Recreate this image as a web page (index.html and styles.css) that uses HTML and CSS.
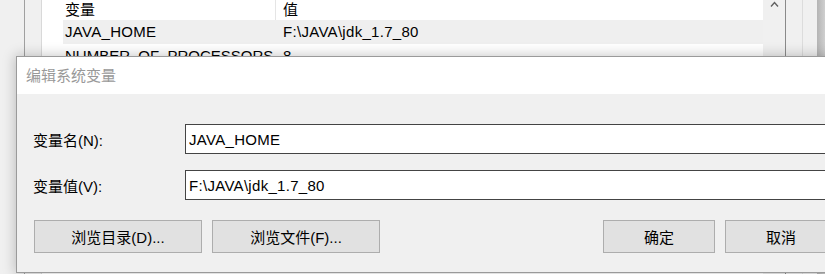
FILE: index.html
```html
<html lang="zh-CN">

<head>
    <meta charset="utf-8">
    <title>编辑系统变量</title>
    <link rel="stylesheet" href="styles.css">
</head>

<body>
    <!-- the environment variables window behind -->
    <div class="backdrop">
        <div class="gutter"></div>
        <div class="gutter2"></div>
        <div class="list">
            <div class="list-head">
                <div class="col-name">变量</div>
                <div class="col-value">值</div>
            </div>
            <div class="list-row selected">
                <div class="col-name">JAVA_HOME</div>
                <div class="col-value">F:\JAVA\jdk_1.7_80</div>
            </div>
            <div class="list-row">
                <div class="col-name">NUMBER_OF_PROCESSORS</div>
                <div class="col-value">8</div>
            </div>
        </div>
        <div class="scrollbar">
            <svg class="arrow" width="9" height="6" viewBox="0 0 9 6">
                <polyline points="1,5.5 4.5,1.5 8,5.5" fill="none" stroke="#606060" stroke-width="1.4"/>
            </svg>
        </div>
        <div class="pane"></div>
        <div class="pane2"></div>
        <div class="edge"></div>
    </div>

    <!-- edit dialog on top -->
    <div class="dialog">
        <div class="dialog-title">编辑系统变量</div>
        <div class="dialog-body">
            <div class="fields">
                <label for="var_name">变量名(N):</label>
                <input type="text" id="var_name" value="JAVA_HOME">
                <label for="var_value">变量值(V):</label>
                <input type="text" id="var_value" value="F:\JAVA\jdk_1.7_80">
            </div>
            <div class="dialog-btns">
                <div class="btn-group">
                    <button type="button" class="btn-wide">浏览目录(D)...</button>
                    <button type="button" class="btn-wide">浏览文件(F)...</button>
                </div>
                <div class="btn-group">
                    <button type="button">确定</button>
                    <button type="button">取消</button>
                </div>
            </div>
        </div>
    </div>
</body>

</html>
```

FILE: styles.css
```css
body {
    margin: 0;
    width: 825px;
    height: 274px;
    overflow: hidden;
    position: relative;
    background: #f0f0f0;
    font-family: "Liberation Sans", "Noto Sans CJK SC", sans-serif;
    font-size: 15px;
    color: #000;
}

/* background window */

.backdrop {
    display: flex;
    height: 274px;
}

.gutter {
    width: 24px;
    border-right: 1px solid #a0a0a0;
}

.gutter2 {
    width: 16px;
    border-right: 1px solid #d9d9d9;
}

.list {
    width: 700px;
    padding-left: 21px;
    background: #fff;
}

.list-head,
.list-row {
    display: grid;
    grid-template-columns: 212px 1fr;
    white-space: nowrap;
}

.list-head {
    height: 20px;
    line-height: 20px;
}

.list-head .col-value {
    border-left: 1px solid #e5e5e5;
    padding-left: 7px;
}

.list-row {
    height: 24px;
    line-height: 24px;
}

.list-row .col-value {
    padding-left: 8px;
}

.col-name {
    padding-left: 2px;
}

.selected {
    background: #efefef;
    letter-spacing: 0.3px;
}

.scrollbar {
    width: 22px;
    border-right: 1px solid #8a8a8a;
    background: #f0f0f0;
    display: flex;
    justify-content: center;
}

.arrow {
    margin-top: 1px;
}

.pane {
    width: 16px;
    border-right: 1px solid #dcdcdc;
}

.pane2 {
    width: 14px;
}

.edge {
    flex: 1;
    background: linear-gradient(90deg, #b4b4b4, #cfcfcf);
}

/* edit dialog */

.dialog {
    position: absolute;
    left: 16px;
    top: 56px;
    width: 837px;
    height: 215px;
    border: 1px solid #9a9a9a;
    background: #f0f0f0;
    box-shadow: 0 0 12px 1px rgba(0, 0, 0, 0.22);
    display: flex;
    flex-direction: column;
}

.dialog-title {
    height: 37px;
    line-height: 37px;
    padding-left: 9px;
    background: #fff;
    color: #999;
}

.dialog-body {
    flex: 1;
    padding: 30px 17px 0 17px;
}

.fields {
    display: grid;
    grid-template-columns: 152px 1fr;
    grid-template-rows: 30px 30px;
    row-gap: 16px;
    align-items: center;
    margin-left: -1px;
}

.fields input {
    height: 30px;
    box-sizing: border-box;
    border: 1px solid #444;
    padding: 0 3px;
    font-family: inherit;
    font-size: 15px;
    letter-spacing: 0.3px;
    color: #000;
    background: #fff;
    outline: none;
}

.dialog-btns {
    display: flex;
    justify-content: space-between;
    margin-top: 20px;
}

.btn-group {
    display: flex;
    gap: 10px;
}

button {
    width: 112px;
    height: 33px;
    background: #e1e1e1;
    border: 1px solid #adadad;
    border-radius: 0;
    font-family: inherit;
    font-size: 15px;
    color: #000;
    padding: 0;
}

.btn-wide {
    width: 168px;
}
```
